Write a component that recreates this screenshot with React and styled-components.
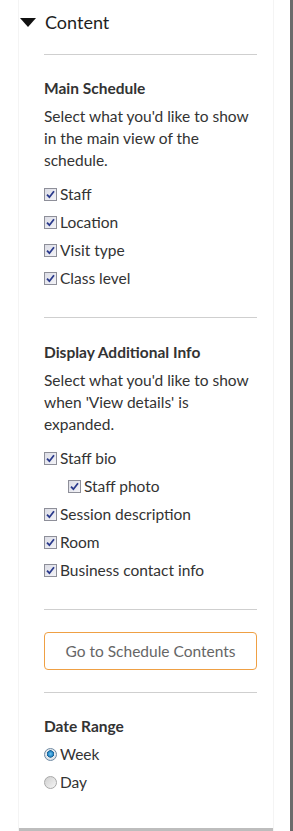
import React from "react";
import styled, { createGlobalStyle } from "styled-components";

const Global = createGlobalStyle`
  html, body { margin: 0; padding: 0; background: #fff; }
  body { font-family: Lato, "Open Sans", sans-serif; color: #333; }
  * { box-sizing: border-box; }
`;

const Frame = styled.div`
  width: 293px;
  height: 831px;
  display: flex;
  overflow: hidden;
  background: #fff;
`;

const Panel = styled.div`
  margin-left: 18px;
  width: 256px;
  height: 831px;
  border-left: 1px solid #f4f4f4;
  border-right: 1px solid #f4f4f4;
  display: flex;
  flex-direction: column;
  position: relative;
`;

const BottomBar = styled.div`
  position: absolute;
  left: 0;
  right: 0;
  bottom: 0;
  height: 3px;
  background: #bdbdbd;
`;

const Gutter = styled.div`
  flex: 1;
`;

const EdgeBar = styled.div`
  width: 3px;
  background: #6b6b6b;
`;

const Header = styled.div`
  display: flex;
  align-items: center;
  height: 44px;
  padding-left: 1px;
  gap: 9px;
`;

const Title = styled.span`
  font-size: 18px;
  color: #1e1e1e;
  line-height: 22px;
`;

const Body = styled.div`
  padding-left: 25px;
  padding-right: 16px;
  display: flex;
  flex-direction: column;
`;

const Divider = styled.hr`
  margin: ${(p) => p.$top || 0}px 0 0 0;
  border: none;
  border-top: 1px solid #cfcfcf;
  height: 0;
  width: 100%;
`;

const Section = styled.section`
  padding: ${(p) => p.$top}px 0 ${(p) => p.$bottom}px;
  display: flex;
  flex-direction: column;
`;

const Heading = styled.h3`
  margin: 0;
  font-size: 15.5px;
  font-weight: 700;
  line-height: 22px;
  color: #333;
`;

const Desc = styled.p`
  margin: 6px 0 0;
  font-size: 15.5px;
  line-height: 22px;
  color: #333;
`;

const List = styled.div`
  margin-top: ${(p) => p.$top}px;
  display: flex;
  flex-direction: column;
`;

const Row = styled.label`
  display: flex;
  align-items: center;
  height: 28px;
  gap: 3px;
  padding-left: ${(p) => (p.$indent ? 24 : 0)}px;
  font-size: 15.5px;
  color: #333;
`;

const Box = styled.span`
  width: 13px;
  height: 13px;
  border: 1px solid #8e8f99;
  background: linear-gradient(135deg, #dcdde6 0%, #f3f3f7 100%);
  display: inline-flex;
  align-items: center;
  justify-content: center;
  flex: none;
`;

const RadioDot = styled.span`
  width: 13px;
  height: 13px;
  border-radius: 50%;
  flex: none;
  border: 1px solid ${(p) => (p.$on ? "#6f8aa3" : "#a8a8a8")};
  background: ${(p) =>
    p.$on
      ? "radial-gradient(circle at 50% 45%, #6ec6f2 0%, #2a8ccc 28%, #1a5f90 42%, #e8ecf0 48%, #c9d0d8 100%)"
      : "linear-gradient(135deg, #cfcfcf 0%, #f6f6f6 100%)"};
`;

const Button = styled.button`
  height: 38px;
  width: 100%;
  border: 1px solid #efa044;
  border-radius: 4px;
  background: #fff;
  font-family: Lato, "Open Sans", sans-serif;
  font-size: 15.5px;
  color: #666;
  cursor: pointer;
`;

const Check = () => (
  <Box>
    <svg width="9" height="9" viewBox="0 0 9 9">
      <path d="M1 4.6 L3.4 7.2 L8 1.2" fill="none" stroke="#2a3a8c" strokeWidth="1.8" />
    </svg>
  </Box>
);

const Triangle = () => (
  <svg width="16" height="9" viewBox="0 0 16 9">
    <path d="M0 0 H16 L8 9 Z" fill="#111" />
  </svg>
);

const CheckRow = ({ children, indent }) => (
  <Row $indent={indent}>
    <Check />
    {children}
  </Row>
);

export default function App() {
  return (
    <>
      <Global />
      <Frame>
        <Panel>
          <Header>
            <Triangle />
            <Title>Content</Title>
          </Header>
          <Body>
            <Divider $top={10} />
            <Section $top={22} $bottom={25}>
              <Heading>Main Schedule</Heading>
              <Desc>Select what you'd like to show in the main view of the schedule.</Desc>
              <List $top={9}>
                <CheckRow>Staff</CheckRow>
                <CheckRow>Location</CheckRow>
                <CheckRow>Visit type</CheckRow>
                <CheckRow>Class level</CheckRow>
              </List>
            </Section>
            <Divider />
            <Section $top={23} $bottom={25}>
              <Heading>Display Additional Info</Heading>
              <Desc>Select what you'd like to show when 'View details' is expanded.</Desc>
              <List $top={9}>
                <CheckRow>Staff bio</CheckRow>
                <CheckRow indent>Staff photo</CheckRow>
                <CheckRow>Session description</CheckRow>
                <CheckRow>Room</CheckRow>
                <CheckRow>Business contact info</CheckRow>
              </List>
            </Section>
            <Divider />
            <Section $top={22} $bottom={22}>
              <Button>Go to Schedule Contents</Button>
            </Section>
            <Divider />
            <Section $top={22} $bottom={0}>
              <Heading>Date Range</Heading>
              <List $top={3}>
                <Row>
                  <RadioDot $on />
                  Week
                </Row>
                <Row>
                  <RadioDot />
                  Day
                </Row>
              </List>
            </Section>
          </Body>
          <BottomBar />
        </Panel>
        <Gutter />
        <EdgeBar />
      </Frame>
    </>
  );
}
